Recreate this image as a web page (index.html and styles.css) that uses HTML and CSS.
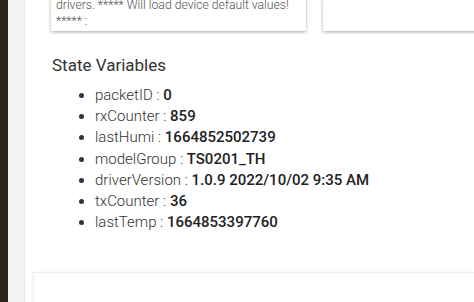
FILE: index.html
```html
<!DOCTYPE html>
<html>
<head>
    <title>Device Details</title>
    <link rel="stylesheet" href="styles.css">
</head>
<body>
    <div class="edge"></div>
    <div class="gutter"></div>
    <div class="panel">
        <div class="details">
            <!-- Top cards, scrolled partly out of view -->
            <div class="cards">
                <div class="card">
                    <p>drivers. ***** Will load device default values!</p>
                    <p>***** :</p>
                </div>
                <div class="card"></div>
            </div>

            <!-- State Variables -->
            <h3>State Variables</h3>
            <ul class="states">
                <li>packetID : <b>0</b></li>
                <li>rxCounter : <b>859</b></li>
                <li>lastHumi : <b>1664852502739</b></li>
                <li>modelGroup : <b>TS0201_TH</b></li>
                <li>driverVersion : <b>1.0.9 2022/10/02 9:35 AM</b></li>
                <li>txCounter : <b>36</b></li>
                <li>lastTemp : <b>1664853397760</b></li>
            </ul>
        </div>

        <div class="section-card"></div>
    </div>
</body>
</html>
```

FILE: styles.css
```css
html, body {
    height: 100%;
}

body {
    margin: 0;
    display: flex;
    overflow: hidden;
    font-family: Roboto, "Noto Sans", sans-serif;
    background-color: #fff;
}

.edge {
    width: 8px;
    flex: none;
    background-color: #2e2521;
}

.gutter {
    width: 16px;
    flex: none;
    background-color: #f4f4f4;
    border-right: 1px solid #e6e6e6;
}

.panel {
    flex: 1;
    min-width: 0;
    padding-left: 8px;
    background-color: white;
}

.details {
    padding-left: 18px;
}

.cards {
    display: grid;
    grid-template-columns: 255px 160px;
    gap: 17px;
    margin-top: -3px;
}

.card {
    background-color: white;
    padding: 0 5px 2px;
    box-shadow: 0 1px 3px rgba(0,0,0,0.35);
    font-size: 12.2px;
    font-weight: 300;
    line-height: 16px;
    color: #555;
}

.card p {
    margin: 0;
}

h3 {
    margin: 24px 0 0 1px;
    font-size: 17px;
    font-weight: 400;
    color: #333;
}

.states {
    margin: 10px 0 0;
    padding-left: 44px;
    font-size: 15px;
    font-weight: 300;
    line-height: 21.2px;
    color: #333;
}

.states b {
    font-weight: 500;
    color: #222;
}

.section-card {
    margin-top: 39px;
    height: 60px;
    border: 1px solid #eee;
    border-right: none;
    box-shadow: 0 0 3px rgba(0,0,0,0.06);
}
```
